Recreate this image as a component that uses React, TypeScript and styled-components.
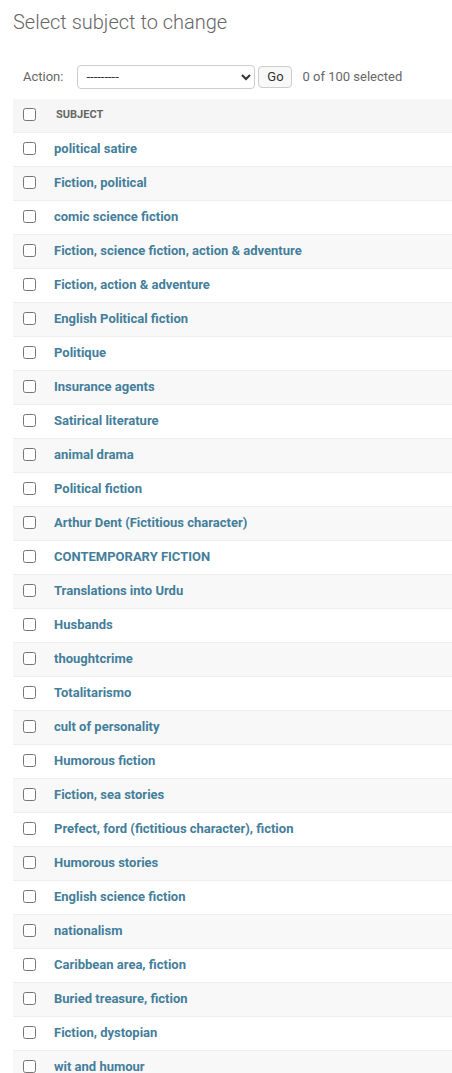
import React from "react";
import styled, { createGlobalStyle } from "styled-components";

const Global = createGlobalStyle`
  html, body { margin: 0; padding: 0; background: #fff; }
  body { font-family: Roboto, "Liberation Sans", Arial, sans-serif; font-size: 14px; color: #333; }
  *, *::before, *::after { box-sizing: border-box; }
`;

const subjects = [
  "political satire",
  "Fiction, political",
  "comic science fiction",
  "Fiction, science fiction, action & adventure",
  "Fiction, action & adventure",
  "English Political fiction",
  "Politique",
  "Insurance agents",
  "Satirical literature",
  "animal drama",
  "Political fiction",
  "Arthur Dent (Fictitious character)",
  "CONTEMPORARY FICTION",
  "Translations into Urdu",
  "Husbands",
  "thoughtcrime",
  "Totalitarismo",
  "cult of personality",
  "Humorous fiction",
  "Fiction, sea stories",
  "Prefect, ford (fictitious character), fiction",
  "Humorous stories",
  "English science fiction",
  "nationalism",
  "Caribbean area, fiction",
  "Buried treasure, fiction",
  "Fiction, dystopian",
  "wit and humour",
];

const Content = styled.div`
  padding: 10px 0 0 13px;
`;

const Title = styled.h1`
  margin: 0 0 21px;
  font-size: 20px;
  line-height: 24px;
  font-weight: 300;
  color: #666;
`;

const Actions = styled.div`
  display: flex;
  align-items: center;
  padding: 10px 10px 11px;
  height: 44px;
  color: #666;
  font-size: 13px;
`;

const ActionLabel = styled.label`
  margin-right: 14px;
`;

const Select = styled.select`
  width: 178px;
  height: 24px;
  border: 1px solid #ccc;
  border-radius: 4px;
  background: #fff;
  font-family: Roboto, "Liberation Sans", Arial, sans-serif;
  font-size: 13px;
  color: #333;
  padding: 0 4px;
`;

const GoButton = styled.button`
  margin-left: 3px;
  width: 34px;
  height: 22px;
  border: 1px solid #ccc;
  border-radius: 4px;
  background: #f8f8f8;
  font-family: Roboto, "Liberation Sans", Arial, sans-serif;
  font-size: 13px;
  color: #333;
  padding: 0;
`;

const Counter = styled.span`
  margin-left: 10px;
  color: #666;
`;

const Table = styled.div`
  display: flex;
  flex-direction: column;
`;

const Row = styled.div<{ $head?: boolean; $alt?: boolean }>`
  display: flex;
  align-items: center;
  height: 34px;
  padding-bottom: 2px;
  border-bottom: 1px solid #eee;
  background: ${(p) => (p.$head ? "#f6f6f6" : p.$alt ? "#f8f8f8" : "#fff")};
`;

const CheckCell = styled.div`
  width: 41px;
  padding-left: 10px;
  display: flex;
  align-items: center;
`;

const Check = styled.input`
  margin: 0;
  width: 13px;
  height: 13px;
`;

const HeadText = styled.span`
  margin-left: 2px;
  font-size: 11px;
  font-weight: 700;
  text-transform: uppercase;
  color: #666;
`;

const Link = styled.a`
  font-size: 13px;
  font-weight: 700;
  color: #447e9b;
  text-decoration: none;
`;

export default function App() {
  return (
    <>
      <Global />
      <Content>
        <Title>Select subject to change</Title>
        <Actions>
          <ActionLabel>Action:</ActionLabel>
          <Select defaultValue="">
            <option value="">---------</option>
          </Select>
          <GoButton>Go</GoButton>
          <Counter>0 of 100 selected</Counter>
        </Actions>
        <Table>
          <Row $head>
            <CheckCell>
              <Check type="checkbox" />
            </CheckCell>
            <HeadText>Subject</HeadText>
          </Row>
          {subjects.map((s, i) => (
            <Row key={i} $alt={i % 2 === 1}>
              <CheckCell>
                <Check type="checkbox" />
              </CheckCell>
              <Link href="#">{s}</Link>
            </Row>
          ))}
        </Table>
      </Content>
    </>
  );
}
